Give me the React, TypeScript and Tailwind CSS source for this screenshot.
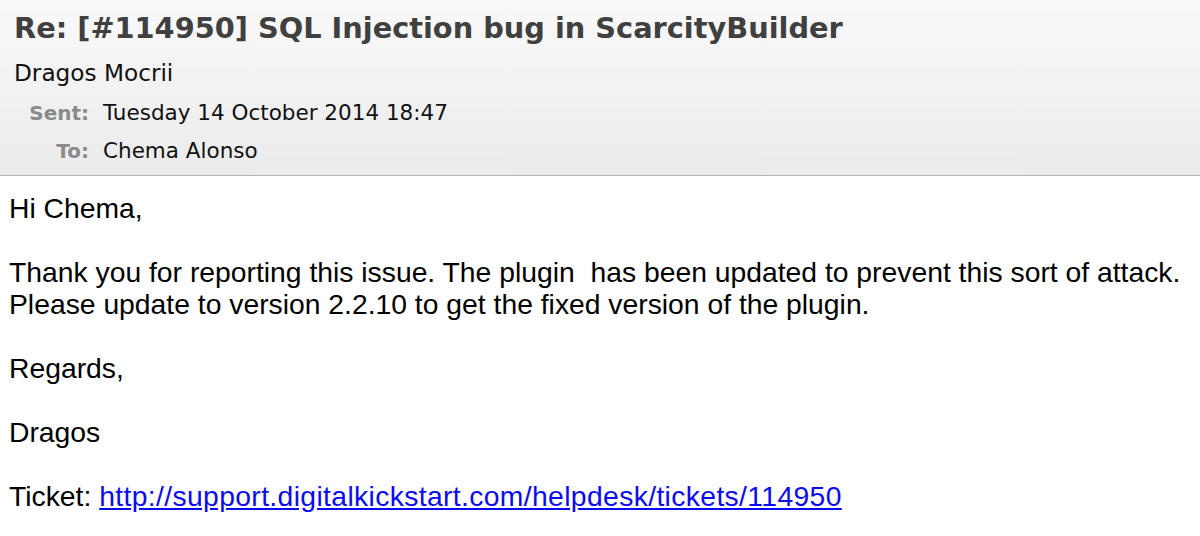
const body = "font-['Liberation_Sans',Arial,sans-serif]";
const head = "font-['DejaVu_Sans',Verdana,sans-serif]";

const Field = ({ label, value }: { label: string; value: string }) => (
	<div className="flex items-baseline">
		<span className="w-[89px] text-right font-bold text-[#8a8a8a] text-[20px]">{label}</span>
		<span className="ml-[14px] text-[#111]">{value}</span>
	</div>
);

// Vue d'un email ouvert
const App = () => {
	return (
		<div className="w-[1200px] h-[536px] bg-white overflow-hidden">
			<div className={`${head} h-[176px] border-b border-[#b5b5b5] bg-gradient-to-b from-[#f8f9f8] to-[#ebebeb] px-[14px] pt-[9px]`}>
				<h1 className="text-[28.8px] leading-[38px] font-bold text-[#404040] whitespace-nowrap">
					Re: [#114950] SQL Injection bug in ScarcityBuilder
				</h1>
				<div className="mt-[12px] text-[23.2px] leading-[28px] text-[#111]">Dragos Mocrii</div>
				<div className="mt-[7px] -ml-[14px] text-[21.5px] leading-[37px]">
					<Field label="Sent:" value="Tuesday 14 October 2014 18:47" />
					<Field label="To:" value="Chema Alonso" />
				</div>
			</div>

			<div className={`${body} px-[9px] pt-[16px] text-[28.3px] leading-[32px] text-black`}>
				<p>Hi Chema,</p>
				<p className="mt-[32px] whitespace-pre">Thank you for reporting this issue. The plugin  has been updated to prevent this sort of attack.</p>
				<p>Please update to version 2.2.10 to get the fixed version of the plugin.</p>
				<p className="mt-[32px]">Regards,</p>
				<p className="mt-[32px]">Dragos</p>
				<p className="mt-[32px]">
					Ticket:{" "}
					<a href="#" className="text-[#0b0bee] underline tracking-[0.36px]">
						http://support.digitalkickstart.com/helpdesk/tickets/114950
					</a>
				</p>
			</div>
		</div>
	);
};

export default App;
